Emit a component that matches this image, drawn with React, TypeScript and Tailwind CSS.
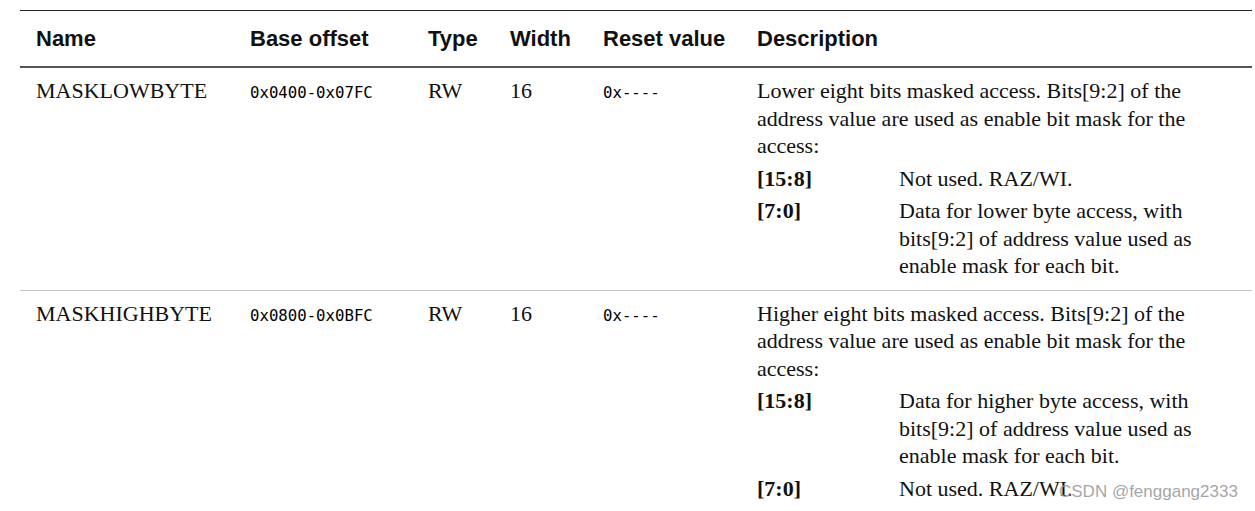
const serif = "font-['Liberation_Serif',serif] text-[22px] leading-[27.5px]";
const mono = "pt-[2px] font-['DejaVu_Sans_Mono',monospace] text-[15.7px] leading-[27.5px] text-black";

type Bit = { bits: string; lines: string[] };
type Reg = {
  name: string;
  offset: string;
  type: string;
  width: string;
  reset: string;
  desc: string[];
  fields: Bit[];
};

const regs: Reg[] = [
  {
    name: "MASKLOWBYTE",
    offset: "0x0400-0x07FC",
    type: "RW",
    width: "16",
    reset: "0x----",
    desc: [
      "Lower eight bits masked access. Bits[9:2] of the",
      "address value are used as enable bit mask for the",
      "access:",
    ],
    fields: [
      { bits: "[15:8]", lines: ["Not used. RAZ/WI."] },
      {
        bits: "[7:0]",
        lines: [
          "Data for lower byte access, with",
          "bits[9:2] of address value used as",
          "enable mask for each bit.",
        ],
      },
    ],
  },
  {
    name: "MASKHIGHBYTE",
    offset: "0x0800-0x0BFC",
    type: "RW",
    width: "16",
    reset: "0x----",
    desc: [
      "Higher eight bits masked access. Bits[9:2] of the",
      "address value are used as enable bit mask for the",
      "access:",
    ],
    fields: [
      {
        bits: "[15:8]",
        lines: [
          "Data for higher byte access, with",
          "bits[9:2] of address value used as",
          "enable mask for each bit.",
        ],
      },
      { bits: "[7:0]", lines: ["Not used. RAZ/WI."] },
    ],
  },
];

const cols = "grid grid-cols-[230px_178px_82px_93px_154px_1fr]";

export default function App() {
  return (
    <div className="relative h-[511px] w-[1255px] overflow-hidden bg-white pl-[20px] pr-[3px] pt-[10px] text-[#111]">
      <div className="w-[1232px]">
        <div
          className={`${cols} h-[58px] items-center border-t border-b-2 border-t-[#222] border-b-[#555] font-['Liberation_Sans',sans-serif] text-[22px] font-bold`}
        >
          <div className="pl-4">Name</div>
          <div>Base offset</div>
          <div>Type</div>
          <div>Width</div>
          <div>Reset value</div>
          <div>Description</div>
        </div>

        {regs.map((r, i) => (
          <div
            key={r.name}
            className={`${cols} pt-[9px] pb-[10px] ${i === 0 ? "border-b border-[#c4c4c4]" : ""}`}
          >
            <div className={`pl-4 ${serif}`}>{r.name}</div>
            <div className={mono}>{r.offset}</div>
            <div className={serif}>{r.type}</div>
            <div className={serif}>{r.width}</div>
            <div className={mono}>{r.reset}</div>
            <div className={serif}>
              {r.desc.map((l) => (
                <div key={l}>{l}</div>
              ))}
              {r.fields.map((f) => (
                <div key={f.bits} className="grid grid-cols-[142px_1fr] pt-[5px]">
                  <div className="font-bold">{f.bits}</div>
                  <div>
                    {f.lines.map((l) => (
                      <div key={l}>{l}</div>
                    ))}
                  </div>
                </div>
              ))}
            </div>
          </div>
        ))}
      </div>

      <div className="absolute left-[1059px] top-[481px] font-['Liberation_Sans',sans-serif] text-[17px] leading-[22px] text-[#9a9a9a]/90">
        CSDN @fenggang2333
      </div>
    </div>
  );
}
